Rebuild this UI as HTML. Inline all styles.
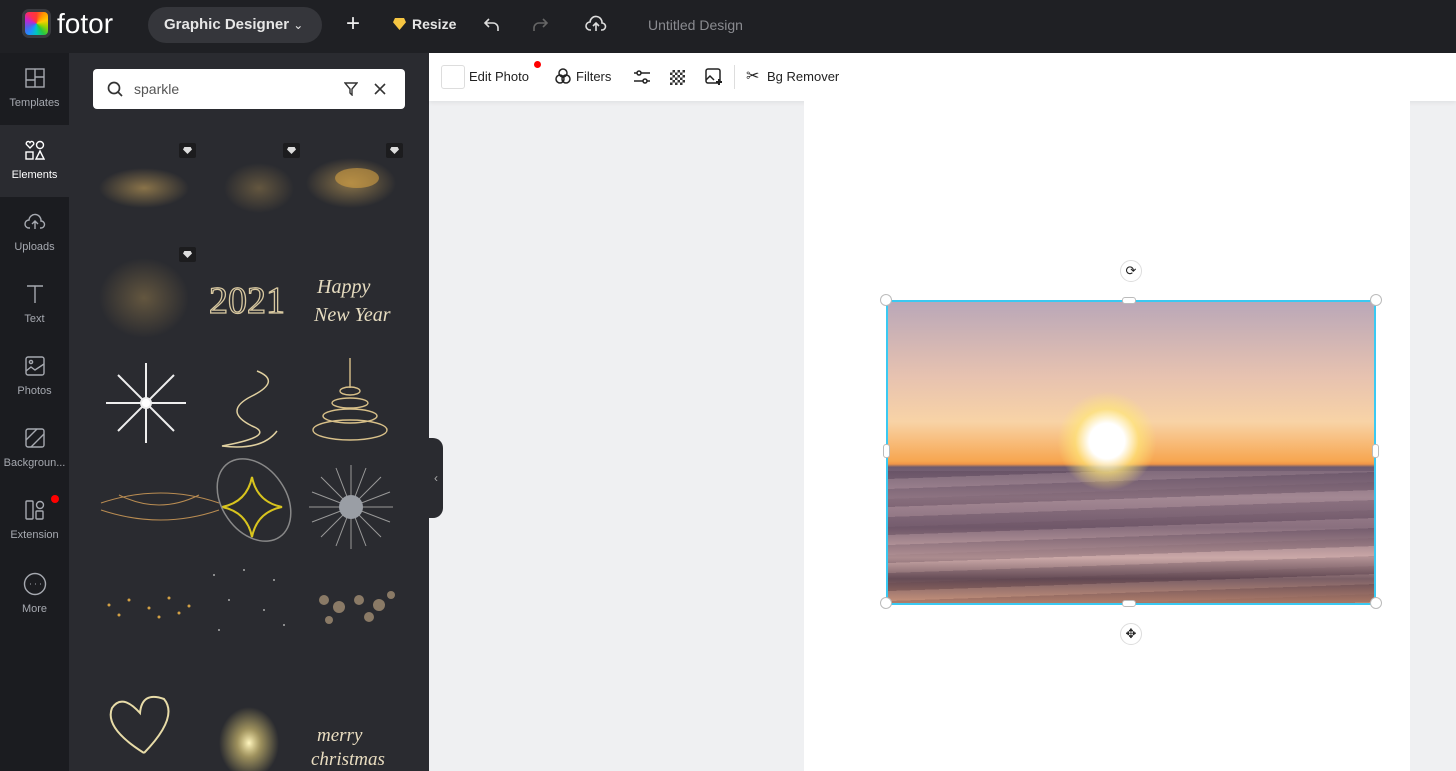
<!DOCTYPE html>
<html><head><meta charset="utf-8"><style>
*{margin:0;padding:0;box-sizing:border-box}
body{width:1456px;height:771px;overflow:hidden;font-family:"Liberation Sans",sans-serif;background:#eff0f2;position:relative}
.top{position:absolute;left:0;top:0;width:1456px;height:53px;background:#1f2024;color:#fff}
.abs{position:absolute}
.side{position:absolute;left:0;top:53px;width:69px;height:718px;background:#1b1c20}
.si{position:absolute;left:0;width:69px;height:72px;text-align:center;color:#a6a9b0;font-size:11px}
.si svg{display:block;margin:15px auto 9px}
.panel{position:absolute;left:69px;top:53px;width:360px;height:718px;background:#2a2b30}
.tb{position:absolute;left:429px;top:53px;width:1027px;height:48px;background:#fff;box-shadow:0 2px 4px rgba(0,0,0,.06);font-size:13px;color:#222}
.dia{position:absolute;width:17px;height:15px;background:#1c1c1e;border-radius:2px}
.dia:after{content:"";position:absolute;left:4px;top:4px;width:9px;height:7px;background:#ddd;clip-path:polygon(15% 0,85% 0,100% 35%,50% 100%,0 35%)}
.h{position:absolute;width:12px;height:12px;border-radius:50%;background:#fff;border:1px solid #bbb}
</style></head><body>
<div class="top">
 <div class="abs" style="left:22px;top:9px;width:29px;height:29px;border-radius:7px;background:#3a3b40;padding:3px">
  <div style="width:23px;height:23px;border-radius:4px;background:conic-gradient(#ff3b30,#ff9500,#ffcc00,#9ad400,#28c840,#00c7be,#1e90ff,#5e5ce6,#c026d3,#ff2d55,#ff3b30)"></div></div>
 <div class="abs" style="left:57px;top:6px;font-size:28px;line-height:36px;color:#fff">fotor</div>
 <div class="abs" style="left:148px;top:7px;width:174px;height:36px;border-radius:18px;background:#35363b;font-size:15px;font-weight:bold;color:#e6e6e6;line-height:36px;padding-left:16px">Graphic Designer <span style="font-weight:normal;font-size:12px">&#8964;</span></div>
 <div class="abs" style="left:346px;top:10px;font-size:24px;color:#eee">+</div>
 <div class="abs" style="left:393px;top:18px;width:13px;height:12px;background:#f5c542;clip-path:polygon(15% 0,85% 0,100% 35%,50% 100%,0 35%)"></div>
 <div class="abs" style="left:412px;top:16px;font-size:14px;font-weight:bold;color:#e6e6e6">Resize</div>
 <svg class="abs" style="left:482px;top:15px" width="20" height="20" fill="none" stroke="#ddd" stroke-width="1.6"><path d="M7 4 3 8l4 4M3 8h8a5 5 0 0 1 5 5v3"/></svg>
 <svg class="abs" style="left:530px;top:15px" width="20" height="20" fill="none" stroke="#666" stroke-width="1.6"><path d="M13 4l4 4-4 4M17 8H9a5 5 0 0 0-5 5v3"/></svg>
 <svg class="abs" style="left:585px;top:14px" width="22" height="20" fill="none" stroke="#ddd" stroke-width="1.6"><path d="M6 16H5a4 4 0 0 1 0-8 6 6 0 0 1 12 1 3.5 3.5 0 0 1 0 7h-1M11 17V10M8 12l3-3 3 3"/></svg>
 <div class="abs" style="left:648px;top:17px;font-size:14px;color:#8a8b90">Untitled Design</div>
</div>
<div class="side">
 <div class="si" style="top:0"><svg width="20" height="20" fill="none" stroke="#a6a9b0" stroke-width="1.4"><rect x="1" y="1" width="18" height="18"/><path d="M10 1v18M10 9h9M1 12h9"/></svg>Templates</div>
 <div class="si" style="top:72px;background:#2a2b30;color:#fff"><svg width="20" height="20" fill="none" stroke="#fff" stroke-width="1.4"><path d="M5 8 1.5 4.5a2 2 0 0 1 3.5-2 2 2 0 0 1 3.5 2z"/><circle cx="15" cy="5" r="3.5"/><rect x="1" y="12" width="7" height="7"/><path d="M15 11l4 8h-8z"/></svg>Elements</div>
 <div class="si" style="top:144px"><svg width="22" height="20" fill="none" stroke="#a6a9b0" stroke-width="1.4"><path d="M6 16H5a4 4 0 0 1 0-8 6 6 0 0 1 12 1 3.5 3.5 0 0 1 0 7h-1M11 17V10M8 12l3-3 3 3"/></svg>Uploads</div>
 <div class="si" style="top:216px"><svg width="20" height="20" fill="none" stroke="#a6a9b0" stroke-width="1.4"><path d="M2 2h16M10 2v17"/></svg>Text</div>
 <div class="si" style="top:288px"><svg width="20" height="20" fill="none" stroke="#a6a9b0" stroke-width="1.4"><rect x="1" y="1" width="18" height="18" rx="2"/><circle cx="6" cy="6" r="1.6"/><path d="M1 15l5-4 4 3 9-6"/></svg>Photos</div>
 <div class="si" style="top:360px"><svg width="20" height="20" fill="none" stroke="#a6a9b0" stroke-width="1.4"><rect x="1" y="1" width="18" height="18" rx="2"/><path d="M1 12 12 1M6 19 19 6"/></svg>Backgroun...</div>
 <div class="si" style="top:432px"><svg width="20" height="20" fill="none" stroke="#a6a9b0" stroke-width="1.4"><rect x="1" y="1" width="7" height="18" rx="1"/><circle cx="15" cy="5" r="3.5"/><rect x="11" y="11" width="7" height="8" rx="1"/></svg>Extension</div>
 <div class="abs" style="left:51px;top:442px;width:8px;height:8px;border-radius:50%;background:#f00"></div>
 <div class="si" style="top:504px"><svg width="24" height="24" fill="none" stroke="#a6a9b0" stroke-width="1.4" style="margin-bottom:7px"><circle cx="12" cy="12" r="10.5"/><path d="M7 12h.5M12 12h.5M17 12h.5" stroke-width="2"/></svg>More</div>
</div>
<div class="panel">
 <div class="abs" style="left:24px;top:16px;width:312px;height:40px;background:#fff;border-radius:4px">
  <svg class="abs" style="left:14px;top:12px" width="16" height="16" fill="none" stroke="#333" stroke-width="1.7"><circle cx="7" cy="7" r="5.5"/><path d="M11 11l4 4"/></svg>
  <div class="abs" style="left:41px;top:12px;font-size:14px;color:#555">sparkle</div>
  <svg class="abs" style="left:251px;top:13px" width="14" height="14" fill="none" stroke="#333" stroke-width="1.4"><path d="M1 1h12L8 7v6L6 11V7z"/></svg>
  <svg class="abs" style="left:281px;top:14px" width="12" height="12" stroke="#333" stroke-width="1.6"><path d="M1 1l10 10M11 1 1 11"/></svg>
 </div>
 <div class="dia" style="left:110px;top:90px"></div><div class="dia" style="left:214px;top:90px"></div><div class="dia" style="left:317px;top:90px"></div><div class="dia" style="left:110px;top:194px"></div>
 <svg class="abs" style="left:0;top:60px" width="360" height="658">
  <defs><radialGradient id="g1"><stop offset="0" stop-color="#c9a35a" stop-opacity=".6"/><stop offset="1" stop-color="#c9a35a" stop-opacity="0"/></radialGradient>
  <radialGradient id="g2"><stop offset="0" stop-color="#fff6c0"/><stop offset=".4" stop-color="#e8d27a" stop-opacity=".6"/><stop offset="1" stop-color="#e8d27a" stop-opacity="0"/></radialGradient></defs>
  <ellipse cx="75" cy="75" rx="45" ry="20" fill="url(#g1)"/>
  <ellipse cx="190" cy="75" rx="35" ry="25" fill="url(#g1)" opacity=".6"/>
  <ellipse cx="282" cy="70" rx="45" ry="25" fill="url(#g1)"/><ellipse cx="288" cy="65" rx="22" ry="10" fill="#d4a043" opacity=".6"/>
  <ellipse cx="75" cy="185" rx="45" ry="40" fill="url(#g1)" opacity=".6"/>
  <text x="140" y="200" font-family="Liberation Serif" font-size="38" fill="none" stroke="#d8c8a0" stroke-width="1.3">2021</text>
  <text x="248" y="180" font-family="Liberation Serif" font-style="italic" font-size="20" fill="#e6dcc0">Happy</text>
  <text x="245" y="208" font-family="Liberation Serif" font-style="italic" font-size="20" fill="#e6dcc0">New Year</text>
  <g stroke="#eee" stroke-width="2" transform="translate(77,290)"><path d="M0-40V40M-40 0H40M-28-28 28 28M28-28-28 28"/><circle r="5" fill="#fff"/></g>
  <path d="M188 258q25 10-5 25t0 30q25 10-30 20q40 5 55-15" fill="none" stroke="#e0d0a0" stroke-width="1.5"/>
  <g fill="none" stroke="#d8c089" stroke-width="1.4"><ellipse cx="281" cy="317" rx="37" ry="10"/><ellipse cx="281" cy="303" rx="27" ry="7"/><ellipse cx="281" cy="290" rx="18" ry="5"/><ellipse cx="281" cy="278" rx="10" ry="4"/><path d="M281 245v30"/></g>
  <g transform="translate(0,-58)">
  <g fill="none" stroke="#b98c52" stroke-width="1"><path d="M32 448q60-20 118 0M32 455q60 20 118 0M50 440q40 20 80 0"/></g>
  <path d="M183 422q5 25 30 30-25 5-30 30-5-25-30-30 25-5 30-30z" fill="none" stroke="#d8c41e" stroke-width="2"/>
  <ellipse cx="185" cy="445" rx="32" ry="45" transform="rotate(-35 185 445)" fill="none" stroke="#888" stroke-width="1.5"/>
  <g stroke="#999" stroke-width="1" transform="translate(282,452)"><path d="M0-42V42M-42 0H42M-30-30 30 30M30-30-30 30M-15-39 15 39M15-39-15 39M-39-15 39 15M39-15-39 15"/><circle r="12" fill="#9a9ea5" stroke="none"/></g>
  <g fill="#d2a045"><circle cx="40" cy="550" r="1.5"/><circle cx="60" cy="545" r="1.5"/><circle cx="80" cy="553" r="1.5"/><circle cx="100" cy="543" r="1.5"/><circle cx="120" cy="551" r="1.5"/><circle cx="50" cy="560" r="1.5"/><circle cx="90" cy="562" r="1.5"/><circle cx="110" cy="558" r="1.5"/></g>
  <g fill="#aaa"><circle cx="145" cy="520" r="1"/><circle cx="175" cy="515" r="1"/><circle cx="205" cy="525" r="1"/><circle cx="160" cy="545" r="1"/><circle cx="195" cy="555" r="1"/><circle cx="215" cy="570" r="1"/><circle cx="150" cy="575" r="1"/></g>
  <g fill="#8a7a66"><circle cx="255" cy="545" r="5"/><circle cx="270" cy="552" r="6"/><circle cx="290" cy="545" r="5"/><circle cx="310" cy="550" r="6"/><circle cx="260" cy="565" r="4"/><circle cx="300" cy="562" r="5"/><circle cx="322" cy="540" r="4"/></g>
  </g>
  <path d="M75 640q-40-25-32-45 10-15 28 5 2-22 24-14 15 18-20 54" fill="none" stroke="#e8dca8" stroke-width="2"/>
  <ellipse cx="180" cy="630" rx="30" ry="36" fill="url(#g2)"/>
  <text x="248" y="628" font-family="Liberation Serif" font-style="italic" font-size="19" fill="#e8dcc0">merry</text>
  <text x="242" y="652" font-family="Liberation Serif" font-style="italic" font-size="19" fill="#e8dcc0">christmas</text>
 </svg>
</div>
<div class="abs" style="left:429px;top:438px;width:14px;height:80px;background:#2a2b30;border-radius:0 10px 10px 0;color:#aaa;font-size:12px;line-height:80px;text-align:center">‹</div>
<div class="tb">
 <div class="abs" style="left:12px;top:12px;width:24px;height:24px;border:1px solid #ddd;border-radius:3px"></div>
 <div class="abs" style="left:40px;top:16px">Edit Photo</div>
 <div class="abs" style="left:105px;top:8px;width:7px;height:7px;border-radius:50%;background:#f00"></div>
 <svg class="abs" style="left:126px;top:15px" width="16" height="17" fill="none" stroke="#222" stroke-width="1.5"><circle cx="8" cy="5" r="4"/><circle cx="5" cy="11" r="4"/><circle cx="11" cy="11" r="4"/></svg>
 <div class="abs" style="left:147px;top:16px">Filters</div>
 <svg class="abs" style="left:204px;top:16px" width="18" height="16" stroke="#222" stroke-width="1.5" fill="#fff"><path d="M1 4h16M1 12h16"/><circle cx="6" cy="4" r="2"/><circle cx="12" cy="12" r="2"/></svg>
 <div class="abs" style="left:241px;top:17px;width:15px;height:15px;background:repeating-conic-gradient(#333 0 25%,#fff 0 50%) 0 0/5px 5px"></div>
 <svg class="abs" style="left:276px;top:15px" width="18" height="18" fill="none" stroke="#222" stroke-width="1.5"><rect x="1" y="1" width="14" height="14" rx="2"/><path d="M1 12l4-4 4 4"/><path d="M14 11v6M11 14h6" stroke-width="2"/></svg>
 <div class="abs" style="left:305px;top:12px;width:1px;height:24px;background:#ddd"></div>
 <div class="abs" style="left:317px;top:13px;font-size:16px">✂</div>
 <div class="abs" style="left:338px;top:16px">Bg Remover</div>
</div>
<div class="abs" style="left:804px;top:101px;width:606px;height:670px;background:#fff"></div>
<div class="abs" style="left:887px;top:301px;width:487px;height:302px;overflow:hidden;background:linear-gradient(180deg,#b9a7b8 0%,#e7c2b0 25%,#f8d3a6 40%,#f7a650 53%,#f09548 54%,#6e5a6e 55%,#9a7f8c 65%,#7c6374 75%,#c7a4a3 85%,#6b5058 92%,#c48c70 100%)">
 <div class="abs" style="left:0;top:170px;width:487px;height:132px;background:repeating-linear-gradient(178deg,rgba(60,40,60,.2) 0 8px,rgba(230,200,200,.12) 8px 18px,rgba(80,60,80,.18) 18px 28px)"></div>
 <div class="abs" style="left:170px;top:90px;width:100px;height:100px;border-radius:50%;background:radial-gradient(#fff 0,#fff 25%,rgba(255,230,120,.7) 45%,rgba(255,200,80,0) 70%)"></div>
</div>
<div class="abs" style="left:886px;top:300px;width:490px;height:305px;border:2px solid #3ac9f2"></div>
<div class="h" style="left:880px;top:294px"></div><div class="h" style="left:1370px;top:294px"></div><div class="h" style="left:880px;top:597px"></div><div class="h" style="left:1370px;top:597px"></div>
<div class="abs" style="left:1122px;top:297px;width:14px;height:7px;background:#fff;border:1px solid #bbb;border-radius:3px"></div>
<div class="abs" style="left:1122px;top:600px;width:14px;height:7px;background:#fff;border:1px solid #bbb;border-radius:3px"></div>
<div class="abs" style="left:883px;top:444px;width:7px;height:14px;background:#fff;border:1px solid #bbb;border-radius:3px"></div>
<div class="abs" style="left:1372px;top:444px;width:7px;height:14px;background:#fff;border:1px solid #bbb;border-radius:3px"></div>
<div class="abs" style="left:1120px;top:260px;width:22px;height:22px;border-radius:50%;background:#fff;border:1px solid #ddd;font-size:13px;text-align:center;line-height:20px;color:#222">⟳</div>
<div class="abs" style="left:1120px;top:623px;width:22px;height:22px;border-radius:50%;background:#fff;border:1px solid #ddd;font-size:13px;text-align:center;line-height:20px;color:#222">✥</div>
</body></html>
